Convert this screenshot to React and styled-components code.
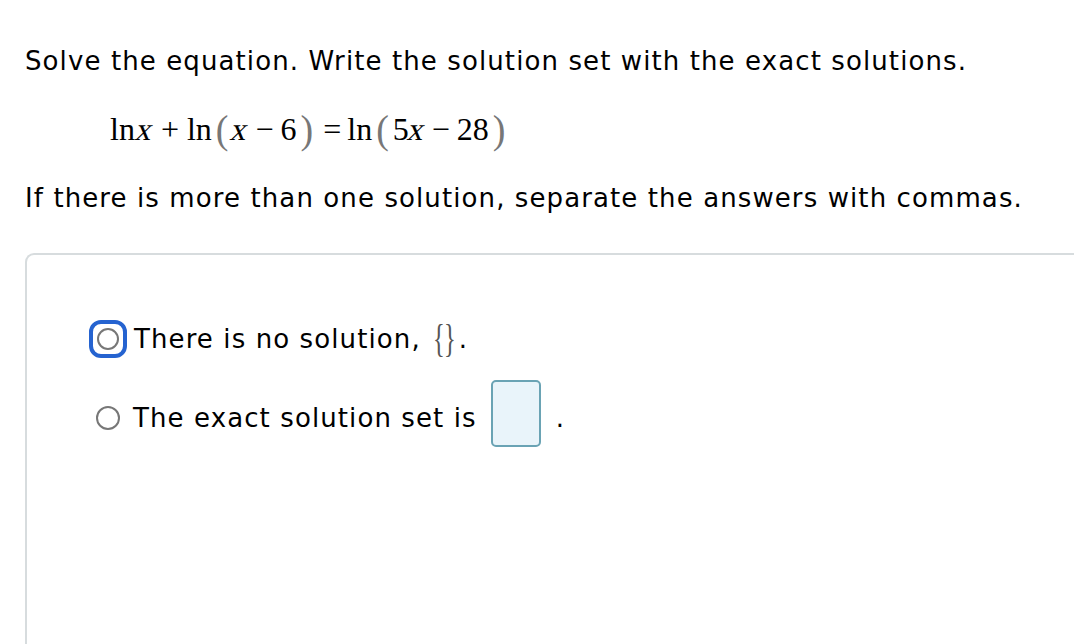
import React from "react";
import styled, { createGlobalStyle } from "styled-components";

const Global = createGlobalStyle`
  html, body { margin: 0; padding: 0; background: #fff; }
  body { font-family: "DejaVu Sans", Verdana, sans-serif; color: #000; overflow: hidden; }
`;

const Page = styled.div`
  width: 1074px;
  height: 644px;
  overflow: hidden;
  padding: 44px 0 0 25px;
  box-sizing: border-box;
`;

const Para = styled.p`
  margin: 0;
  font-size: 26px;
  letter-spacing: 1.1px;
  line-height: 34px;
  white-space: nowrap;
`;

const Equation = styled.div`
  margin: 31px 0 32px 85px;
  font-family: "Liberation Serif", "Times New Roman", serif;
  font-size: 32px;
  line-height: 40px;
  display: flex;
  align-items: center;
  white-space: pre;
`;

const Var = styled.span`
  display: inline-block;
  font-style: normal;
  transform: skewX(-14deg);
  margin-left: ${(p) => p.$ml || 0}px;
  margin-right: ${(p) => p.$mr || 0}px;
`;

const Op = styled.span`
  margin: 0 ${(p) => p.$m || 6}px;
`;

const Paren = styled.span`
  color: #777;
  font-size: 38px;
  transform: scaleY(1.08);
  display: inline-block;
  margin: 0 ${(p) => p.$m || 4}px;
  line-height: 40px;
`;

const Panel = styled.div`
  margin-top: 38px;
  width: 1070px;
  height: 420px;
  border: 2px solid #d7dcde;
  border-right: none;
  border-bottom: none;
  border-top-left-radius: 9px;
  padding: 65px 0 0 62px;
  box-sizing: border-box;
  display: flex;
  flex-direction: column;
  gap: 41px;
`;

const Option = styled.div`
  display: flex;
  align-items: center;
  font-size: 26px;
  letter-spacing: 1.1px;
  height: 38px;
  white-space: pre;
`;

const RadioWrap = styled.span`
  width: 38px;
  height: 38px;
  box-sizing: border-box;
  display: inline-flex;
  align-items: center;
  justify-content: center;
  border: 4px solid ${(p) => (p.$focus ? "#2563d0" : "transparent")};
  border-radius: 12px;
  margin-right: ${(p) => (p.$focus ? 7 : 6)}px;
`;

const Circle = styled.span`
  width: ${(p) => (p.$focus ? 22 : 24)}px;
  height: ${(p) => (p.$focus ? 22 : 24)}px;
  box-sizing: border-box;
  border: 2px solid #777;
  border-radius: 50%;
  background: #fff;
`;

const Braces = styled.span`
  font-family: "Liberation Serif", "Times New Roman", serif;
  color: #555;
  font-size: 36px;
  width: 22px;
  margin-left: 12px;
  margin-right: 4px;
  letter-spacing: -1px;
  display: inline-block;
  white-space: nowrap;
  transform: scale(0.68, 1.12);
  transform-origin: left center;
`;

const AnswerBox = styled.span`
  display: inline-block;
  width: 50px;
  height: 67px;
  box-sizing: border-box;
  border: 2px solid #6aa3b4;
  border-radius: 5px;
  background: #e9f4fa;
  margin: -10px 15px 0 14px;
`;

const Dot = styled.span`
  font-size: 26px;
`;

export default function App() {
  return (
    <>
      <Global />
      <Page>
        <Para>Solve the equation. Write the solution set with the exact solutions.</Para>
        <Equation>
          <span>ln</span><Var $ml={2}>x</Var>
          <Op $m={8}>+</Op>
          <span>ln</span>
          <Paren>(</Paren><Var>x</Var><Op $m={7}>−</Op><span>6</span><Paren>)</Paren>
          <Op $m={6}>=</Op>
          <span>ln</span>
          <Paren>(</Paren><span>5</span><Var>x</Var><Op $m={7}>−</Op><span>28</span><Paren>)</Paren>
        </Equation>
        <Para>If there is more than one solution, separate the answers with commas.</Para>
        <Panel>
          <Option>
            <RadioWrap $focus><Circle $focus /></RadioWrap>
            There is no solution,<Braces>{"{}"}</Braces>.
          </Option>
          <Option>
            <RadioWrap><Circle /></RadioWrap>
            The exact solution set is<AnswerBox /><Dot>.</Dot>
          </Option>
        </Panel>
      </Page>
    </>
  );
}
